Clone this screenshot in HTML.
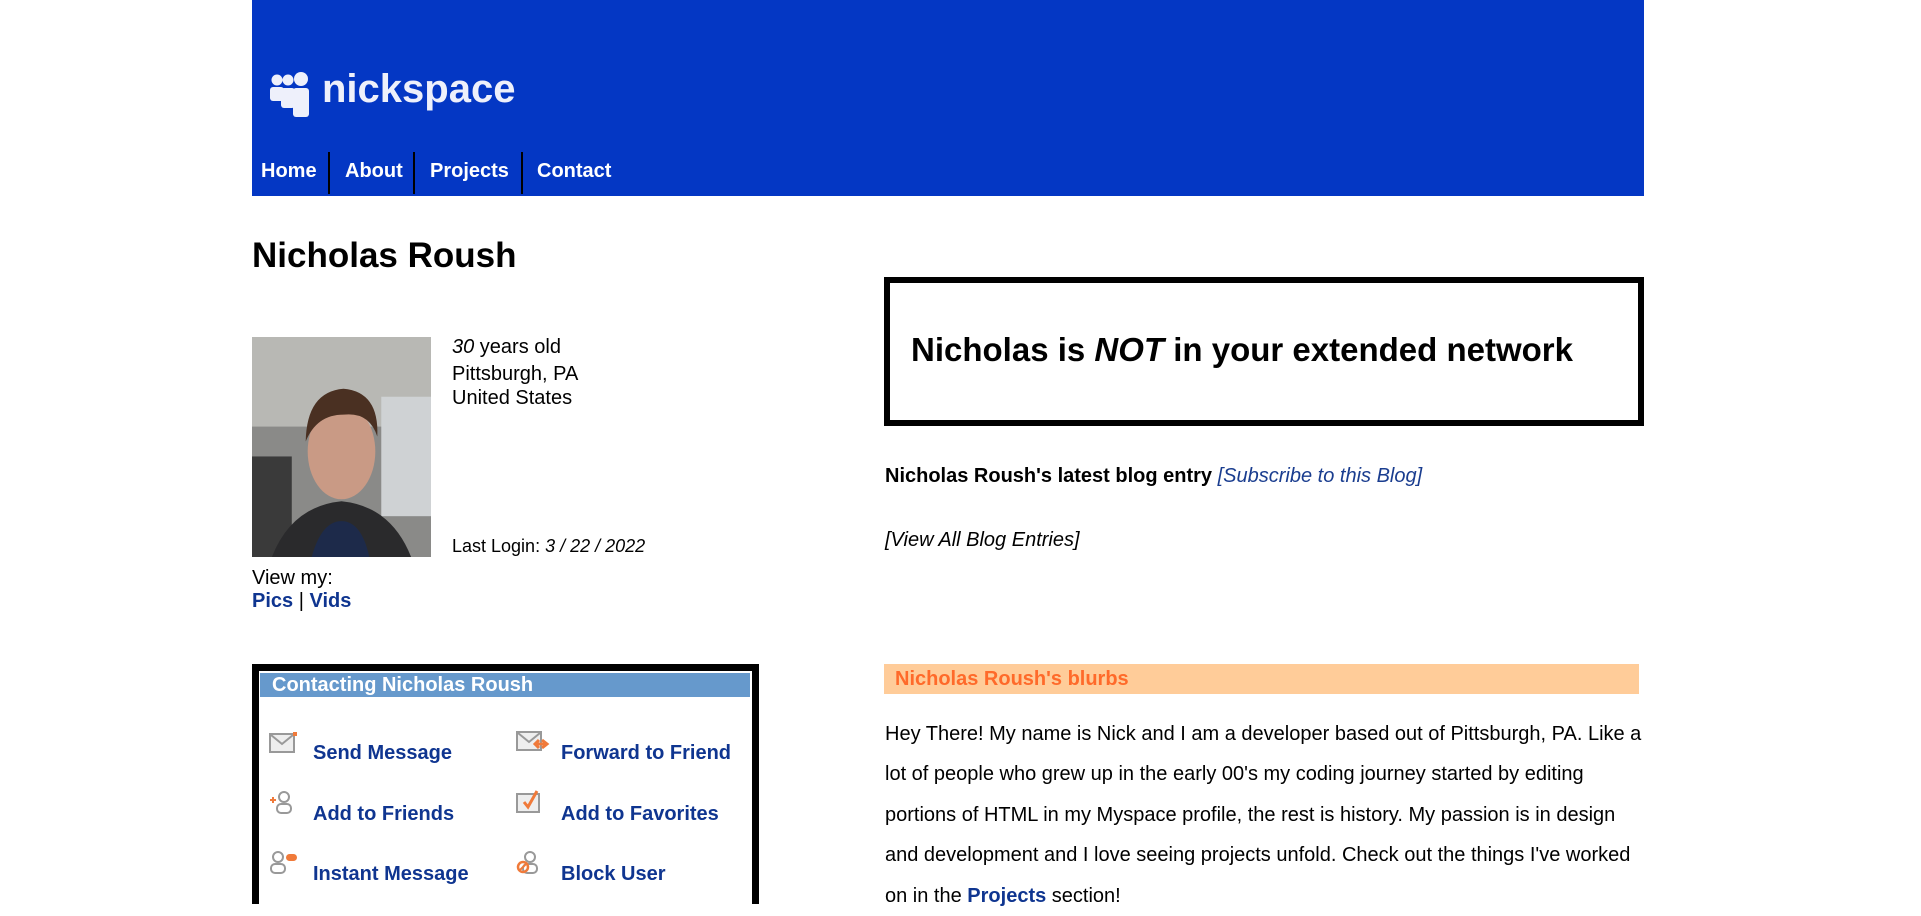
<!DOCTYPE html>
<html><head><meta charset="utf-8"><style>
*{margin:0;padding:0;box-sizing:border-box}
body{width:1921px;height:888px;overflow:hidden;background:#fff;font-family:"Liberation Sans",Arial,sans-serif;position:relative;color:#000}
.a{position:absolute;white-space:nowrap}
#hdr{position:absolute;left:252px;top:0;width:1392px;height:196px;background:#0437c4}
.nav{font-weight:bold;font-size:20px;color:#fff;top:160px}
.sep{position:absolute;top:152px;width:2px;height:42px;background:#000}
.lnk{color:#0f3590;font-weight:bold}
.ci{font-size:20px;font-weight:bold;color:#0f3590}
</style></head><body>
<div id="hdr"></div>
<svg class="a" style="left:267px;top:70px" width="44" height="48" viewBox="0 0 44 48">
<g fill="#eef0fb">
<circle cx="10" cy="10" r="5.5"/><circle cx="21" cy="10" r="5.5"/><circle cx="34" cy="9" r="7"/>
<rect x="3" y="17" width="14" height="14" rx="3"/><rect x="14" y="18" width="14" height="20" rx="3"/><rect x="26" y="18" width="16" height="29" rx="3"/>
</g></svg>
<div class="a" style="left:322px;top:64px;font-size:40px;font-weight:bold;color:#eef0fb;line-height:50px">nickspace</div>
<div class="a nav" style="left:261px">Home</div>
<div class="sep" style="left:328px"></div>
<div class="a nav" style="left:345px">About</div>
<div class="sep" style="left:413px"></div>
<div class="a nav" style="left:430px">Projects</div>
<div class="sep" style="left:521px"></div>
<div class="a nav" style="left:537px">Contact</div>

<div class="a" style="left:252px;top:236px;font-size:35px;font-weight:bold">Nicholas Roush</div>
<svg class="a" style="left:252px;top:337px" width="179" height="220" viewBox="0 0 180 221" preserveAspectRatio="none">
<rect width="180" height="221" fill="#8a8a88"/>
<rect x="0" y="0" width="180" height="90" fill="#b8b8b4"/>
<rect x="130" y="60" width="50" height="120" fill="#cfd2d4"/>
<rect x="0" y="120" width="40" height="101" fill="#3a3a3a"/>
<path d="M20 221 Q40 170 90 165 Q140 170 160 221Z" fill="#2a2a2c"/>
<path d="M60 221 Q70 185 90 185 Q110 185 118 221Z" fill="#1d2a4a"/>
<ellipse cx="90" cy="115" rx="34" ry="48" fill="#c99a85"/>
<path d="M54 105 Q55 55 92 52 Q128 55 126 100 Q118 75 92 78 Q65 78 54 105Z" fill="#4a3022"/>
</svg>
<div class="a" style="left:452px;top:335px;font-size:20px;line-height:24px"><i>30</i> years old</div>
<div class="a" style="left:452px;top:362px;font-size:20px;line-height:24px">Pittsburgh, PA<br>United States</div>
<div class="a" style="left:452px;top:536px;font-size:18px">Last Login: <i>3 / 22 / 2022</i></div>
<div class="a" style="left:252px;top:567px;font-size:20px;line-height:23px">View my:<br><span class="lnk">Pics</span> | <span class="lnk">Vids</span></div>

<div class="a" style="left:252px;top:664px;width:507px;height:240px;border:7px solid #000;border-bottom:none;background:#fff"></div>
<div class="a" style="left:260px;top:673px;width:490px;height:24px;background:#6699cc;color:#fff;font-weight:bold;font-size:20px;line-height:24px;padding-left:12px">Contacting Nicholas Roush</div>
<svg class="a" style="left:268px;top:730px" width="32" height="28"><rect x="2" y="4" width="24" height="18" fill="#eee" stroke="#999" stroke-width="2"/><path d="M3 5 L14 14 L25 5" fill="none" stroke="#999" stroke-width="2"/><rect x="25" y="2" width="4" height="4" fill="#f07a3a"/></svg>
<svg class="a" style="left:515px;top:730px" width="36" height="28"><rect x="2" y="2" width="24" height="18" fill="#eee" stroke="#999" stroke-width="2"/><path d="M3 3 L14 12 L25 3" fill="none" stroke="#999" stroke-width="2"/><path d="M20 14 h12 M27 10 l5 4 -5 4 M24 10 l-4 4 4 4" stroke="#f07a3a" stroke-width="3" fill="none"/></svg>
<svg class="a" style="left:268px;top:790px" width="30" height="30"><circle cx="16" cy="7" r="5" fill="none" stroke="#999" stroke-width="2"/><rect x="9" y="14" width="14" height="9" rx="4" fill="none" stroke="#999" stroke-width="2"/><path d="M2 10h6M5 7v6" stroke="#f07a3a" stroke-width="2"/></svg>
<svg class="a" style="left:515px;top:788px" width="30" height="30"><rect x="2" y="6" width="22" height="18" fill="#eee" stroke="#999" stroke-width="2"/><path d="M9 14 l4 5 9 -16" fill="none" stroke="#f07a3a" stroke-width="3"/></svg>
<svg class="a" style="left:268px;top:850px" width="32" height="30"><circle cx="10" cy="7" r="5" fill="none" stroke="#999" stroke-width="2"/><rect x="3" y="14" width="14" height="9" rx="4" fill="none" stroke="#999" stroke-width="2"/><rect x="18" y="4" width="11" height="7" rx="3.5" fill="#f07a3a"/></svg>
<svg class="a" style="left:515px;top:850px" width="30" height="30"><circle cx="15" cy="7" r="5" fill="none" stroke="#999" stroke-width="2"/><rect x="8" y="14" width="14" height="9" rx="4" fill="none" stroke="#999" stroke-width="2"/><circle cx="8" cy="17" r="5" fill="none" stroke="#f07a3a" stroke-width="2.5"/><path d="M5 20l6-6" stroke="#f07a3a" stroke-width="2"/></svg>
<div class="a ci" style="left:313px;top:742px">Send Message</div>
<div class="a ci" style="left:561px;top:742px">Forward to Friend</div>
<div class="a ci" style="left:313px;top:803px">Add to Friends</div>
<div class="a ci" style="left:561px;top:803px">Add to Favorites</div>
<div class="a ci" style="left:313px;top:863px">Instant Message</div>
<div class="a ci" style="left:561px;top:863px">Block User</div>

<div class="a" style="left:884px;top:277px;width:760px;height:149px;border:6px solid #000"></div>
<div class="a" style="left:911px;top:331px;font-size:33px;font-weight:bold">Nicholas is <i>NOT</i> in your extended network</div>
<div class="a" style="left:885px;top:465px;font-size:20px"><b>Nicholas Roush's latest blog entry</b> <i style="color:#1a3d8f">[Subscribe to this Blog]</i></div>
<div class="a" style="left:885px;top:529px;font-size:20px;font-style:italic">[View All Blog Entries]</div>
<div class="a" style="left:884px;top:664px;width:755px;height:30px;background:#ffcc99;color:#ff6a2a;font-weight:bold;font-size:20px;line-height:30px;padding-left:11px">Nicholas Roush's blurbs</div>
<div class="a" style="left:885px;top:714px;font-size:20px;line-height:40.4px">Hey There! My name is Nick and I am a developer based out of Pittsburgh, PA. Like a<br>lot of people who grew up in the early 00's my coding journey started by editing<br>portions of HTML in my Myspace profile, the rest is history. My passion is in design<br>and development and I love seeing projects unfold. Check out the things I've worked<br>on in the <span class="lnk">Projects</span> section!</div>
</body></html>
